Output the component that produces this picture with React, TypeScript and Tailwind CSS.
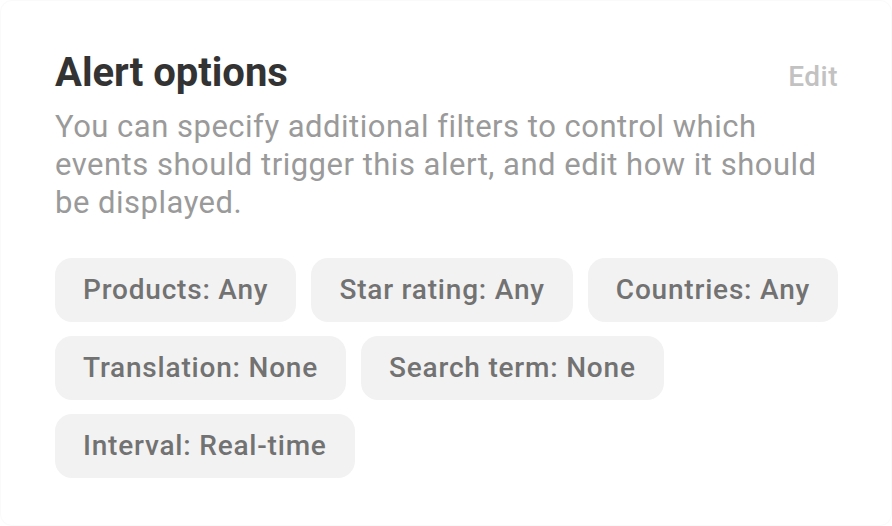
const chips = [
  'Products: Any',
  'Star rating: Any',
  'Countries: Any',
  'Translation: None',
  'Search term: None',
  'Interval: Real-time',
]

export default function App() {
  return (
    <div className="h-[526px] w-[892px] bg-white font-['Roboto',sans-serif]">
      <div className="h-full rounded-[12px] border border-[#fafafa] pl-[54px] pr-[52px] pt-[48px]">
        <div className="flex items-baseline justify-between pr-px">
          <h2 className="text-[40px] font-bold leading-[47px] text-[#333333]">Alert options</h2>
          <button type="button" className="text-[28px] font-medium tracking-[0.5px] text-[#c2c2c2]">
            Edit
          </button>
        </div>
        <p className="mt-[10px] text-[31px] leading-[38px] tracking-[0.5px] text-[#9a9a9a]">
          You can specify additional filters to control which events should trigger this alert, and
          edit how it should be displayed.
        </p>
        <div className="mt-[36px] flex flex-wrap gap-x-[15px] gap-y-[14px]">
          {chips.map((c) => (
            <div
              key={c}
              className="flex h-[64px] items-center rounded-[17px] bg-[#f2f2f2] px-[28px] text-[28px] font-medium tracking-[0.8px] text-[#727272]"
            >
              {c}
            </div>
          ))}
        </div>
      </div>
    </div>
  )
}
